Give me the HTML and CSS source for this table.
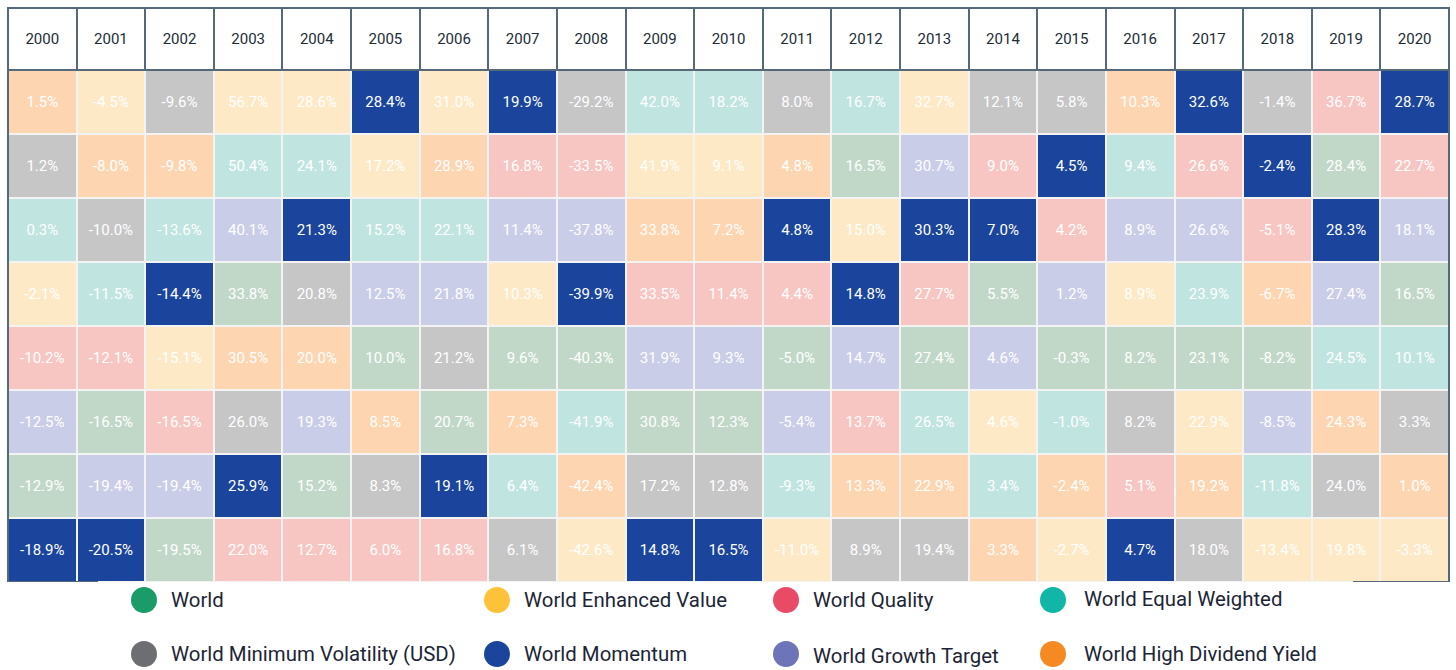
FILE: index.html
```html
<!DOCTYPE html>
<html lang="en">
<head>
<meta charset="utf-8">
<title>Annual returns by index</title>
<link rel="stylesheet" href="styles.css">
</head>
<body>
<div class="heatmap">
  <div class="years">
    <div class="year">2000</div><div class="year">2001</div><div class="year">2002</div><div class="year">2003</div><div class="year">2004</div><div class="year">2005</div><div class="year">2006</div><div class="year">2007</div><div class="year">2008</div><div class="year">2009</div><div class="year">2010</div><div class="year">2011</div><div class="year">2012</div><div class="year">2013</div><div class="year">2014</div><div class="year">2015</div><div class="year">2016</div><div class="year">2017</div><div class="year">2018</div><div class="year">2019</div><div class="year">2020</div>
  </div>
  <div class="grid">
    <div class="cell hdy">1.5%</div><div class="cell ev">-4.5%</div><div class="cell mv">-9.6%</div><div class="cell ev">56.7%</div><div class="cell ev">28.6%</div><div class="cell mom">28.4%</div><div class="cell ev">31.0%</div><div class="cell mom">19.9%</div><div class="cell mv">-29.2%</div><div class="cell ew">42.0%</div><div class="cell ew">18.2%</div><div class="cell mv">8.0%</div><div class="cell ew">16.7%</div><div class="cell ev">32.7%</div><div class="cell mv">12.1%</div><div class="cell mv">5.8%</div><div class="cell hdy">10.3%</div><div class="cell mom">32.6%</div><div class="cell mv">-1.4%</div><div class="cell qu">36.7%</div><div class="cell mom">28.7%</div>

    <div class="cell mv">1.2%</div><div class="cell hdy">-8.0%</div><div class="cell hdy">-9.8%</div><div class="cell ew">50.4%</div><div class="cell ew">24.1%</div><div class="cell ev">17.2%</div><div class="cell hdy">28.9%</div><div class="cell qu">16.8%</div><div class="cell qu">-33.5%</div><div class="cell ev">41.9%</div><div class="cell ev">9.1%</div><div class="cell hdy">4.8%</div><div class="cell wo">16.5%</div><div class="cell gt">30.7%</div><div class="cell qu">9.0%</div><div class="cell mom">4.5%</div><div class="cell ew">9.4%</div><div class="cell qu">26.6%</div><div class="cell mom">-2.4%</div><div class="cell wo">28.4%</div><div class="cell qu">22.7%</div>

    <div class="cell ew">0.3%</div><div class="cell mv">-10.0%</div><div class="cell ew">-13.6%</div><div class="cell gt">40.1%</div><div class="cell mom">21.3%</div><div class="cell ew">15.2%</div><div class="cell ew">22.1%</div><div class="cell gt">11.4%</div><div class="cell gt">-37.8%</div><div class="cell hdy">33.8%</div><div class="cell hdy">7.2%</div><div class="cell mom">4.8%</div><div class="cell ev">15.0%</div><div class="cell mom">30.3%</div><div class="cell mom">7.0%</div><div class="cell qu">4.2%</div><div class="cell gt">8.9%</div><div class="cell gt">26.6%</div><div class="cell qu">-5.1%</div><div class="cell mom">28.3%</div><div class="cell gt">18.1%</div>

    <div class="cell ev">-2.1%</div><div class="cell ew">-11.5%</div><div class="cell mom">-14.4%</div><div class="cell wo">33.8%</div><div class="cell mv">20.8%</div><div class="cell gt">12.5%</div><div class="cell gt">21.8%</div><div class="cell ev">10.3%</div><div class="cell mom">-39.9%</div><div class="cell qu">33.5%</div><div class="cell qu">11.4%</div><div class="cell qu">4.4%</div><div class="cell mom">14.8%</div><div class="cell qu">27.7%</div><div class="cell wo">5.5%</div><div class="cell gt">1.2%</div><div class="cell ev">8.9%</div><div class="cell ew">23.9%</div><div class="cell hdy">-6.7%</div><div class="cell gt">27.4%</div><div class="cell wo">16.5%</div>

    <div class="cell qu">-10.2%</div><div class="cell qu">-12.1%</div><div class="cell ev">-15.1%</div><div class="cell hdy">30.5%</div><div class="cell hdy">20.0%</div><div class="cell wo">10.0%</div><div class="cell mv">21.2%</div><div class="cell wo">9.6%</div><div class="cell wo">-40.3%</div><div class="cell gt">31.9%</div><div class="cell gt">9.3%</div><div class="cell wo">-5.0%</div><div class="cell gt">14.7%</div><div class="cell wo">27.4%</div><div class="cell gt">4.6%</div><div class="cell wo">-0.3%</div><div class="cell wo">8.2%</div><div class="cell wo">23.1%</div><div class="cell wo">-8.2%</div><div class="cell ew">24.5%</div><div class="cell ew">10.1%</div>

    <div class="cell gt">-12.5%</div><div class="cell wo">-16.5%</div><div class="cell qu">-16.5%</div><div class="cell mv">26.0%</div><div class="cell gt">19.3%</div><div class="cell hdy">8.5%</div><div class="cell wo">20.7%</div><div class="cell hdy">7.3%</div><div class="cell ew">-41.9%</div><div class="cell wo">30.8%</div><div class="cell wo">12.3%</div><div class="cell gt">-5.4%</div><div class="cell qu">13.7%</div><div class="cell ew">26.5%</div><div class="cell ev">4.6%</div><div class="cell ew">-1.0%</div><div class="cell mv">8.2%</div><div class="cell ev">22.9%</div><div class="cell gt">-8.5%</div><div class="cell hdy">24.3%</div><div class="cell mv">3.3%</div>

    <div class="cell wo">-12.9%</div><div class="cell gt">-19.4%</div><div class="cell gt">-19.4%</div><div class="cell mom">25.9%</div><div class="cell wo">15.2%</div><div class="cell mv">8.3%</div><div class="cell mom">19.1%</div><div class="cell ew">6.4%</div><div class="cell hdy">-42.4%</div><div class="cell mv">17.2%</div><div class="cell mv">12.8%</div><div class="cell ew">-9.3%</div><div class="cell hdy">13.3%</div><div class="cell hdy">22.9%</div><div class="cell ew">3.4%</div><div class="cell hdy">-2.4%</div><div class="cell qu">5.1%</div><div class="cell hdy">19.2%</div><div class="cell ew">-11.8%</div><div class="cell mv">24.0%</div><div class="cell hdy">1.0%</div>

    <div class="cell mom">-18.9%</div><div class="cell mom">-20.5%</div><div class="cell wo">-19.5%</div><div class="cell qu">22.0%</div><div class="cell qu">12.7%</div><div class="cell qu">6.0%</div><div class="cell qu">16.8%</div><div class="cell mv">6.1%</div><div class="cell ev">-42.6%</div><div class="cell mom">14.8%</div><div class="cell mom">16.5%</div><div class="cell ev">-11.0%</div><div class="cell mv">8.9%</div><div class="cell mv">19.4%</div><div class="cell hdy">3.3%</div><div class="cell ev">-2.7%</div><div class="cell mom">4.7%</div><div class="cell mv">18.0%</div><div class="cell ev">-13.4%</div><div class="cell ev">19.8%</div><div class="cell ev">-3.3%</div>
  </div>
</div>

<div class="legend">
  <div class="item"><span class="dot d-wo"></span><span class="label">World</span></div>
  <div class="item"><span class="dot d-ev"></span><span class="label">World Enhanced Value</span></div>
  <div class="item"><span class="dot d-qu"></span><span class="label">World Quality</span></div>
  <div class="item wide"><span class="dot d-ew"></span><span class="label raised">World Equal Weighted</span></div>
  <div class="item"><span class="dot d-mv"></span><span class="label">World Minimum Volatility (USD)</span></div>
  <div class="item"><span class="dot d-mom"></span><span class="label">World Momentum</span></div>
  <div class="item"><span class="dot d-gt"></span><span class="label lowered">World Growth Target</span></div>
  <div class="item wide"><span class="dot d-hdy"></span><span class="label">World High Dividend Yield</span></div>
</div>
</body>
</html>
```

FILE: styles.css
```css
* {
  box-sizing: border-box;
}

html, body {
  background: #ffffff;
}

body {
  margin: 0;
  padding: 7px;
  font-family: Roboto, "Liberation Sans", Arial, sans-serif;
}

.heatmap {
  width: 1443px;
}

.years {
  display: grid;
  grid-template-columns: repeat(21, 1fr);
  gap: 2px;
  height: 64px;
  background: #55697a;
  border: 2px solid #55697a;
}

.year {
  display: flex;
  align-items: center;
  justify-content: center;
  background: #ffffff;
  font-size: 15px;
  color: #222c36;
}

.grid {
  display: grid;
  grid-template-columns: repeat(21, 1fr);
  grid-auto-rows: 62px;
  gap: 2px;
  border-left: 2px solid #55697a;
  border-right: 2px solid #55697a;
  padding-bottom: 1px;
  background:
    linear-gradient(to right, #55697a 0, #55697a 89px, transparent 89px, transparent 1344px, #55697a 1344px) left bottom / 100% 1px no-repeat,
    #f3f3f3;
}

.cell {
  display: flex;
  align-items: center;
  justify-content: center;
  font-size: 15px;
  color: #ffffff;
}

.hdy { background: #fdd5b1; }
.ev  { background: #fde9c6; }
.mv  { background: #c6c6c7; }
.mom { background: #1b459c; }
.ew  { background: #c0e4e0; }
.gt  { background: #cacde7; }
.qu  { background: #f7c6c3; }
.wo  { background: #c1d8c8; }

.legend {
  display: grid;
  grid-template-columns: 353px 289px 267px auto;
  grid-auto-rows: 30px;
  row-gap: 24px;
  margin-top: 3px;
  padding-left: 124px;
}

.item {
  display: flex;
  align-items: center;
  gap: 14px;
  font-size: 20.4px;
  color: #1c2536;
  white-space: nowrap;
}

.item.wide {
  gap: 18px;
}

.label.raised {
  margin-top: -3px;
}

.label.lowered {
  margin-top: 4px;
}

.dot {
  flex: 0 0 26px;
  width: 26px;
  height: 26px;
  border-radius: 50%;
}

.d-wo  { background: #1b9a6a; }
.d-ev  { background: #fdc13a; }
.d-qu  { background: #e94b66; }
.d-ew  { background: #11b6a6; }
.d-mv  { background: #6c6e72; }
.d-mom { background: #1b449b; }
.d-gt  { background: #6d75b8; }
.d-hdy { background: #f58a22; }
```
